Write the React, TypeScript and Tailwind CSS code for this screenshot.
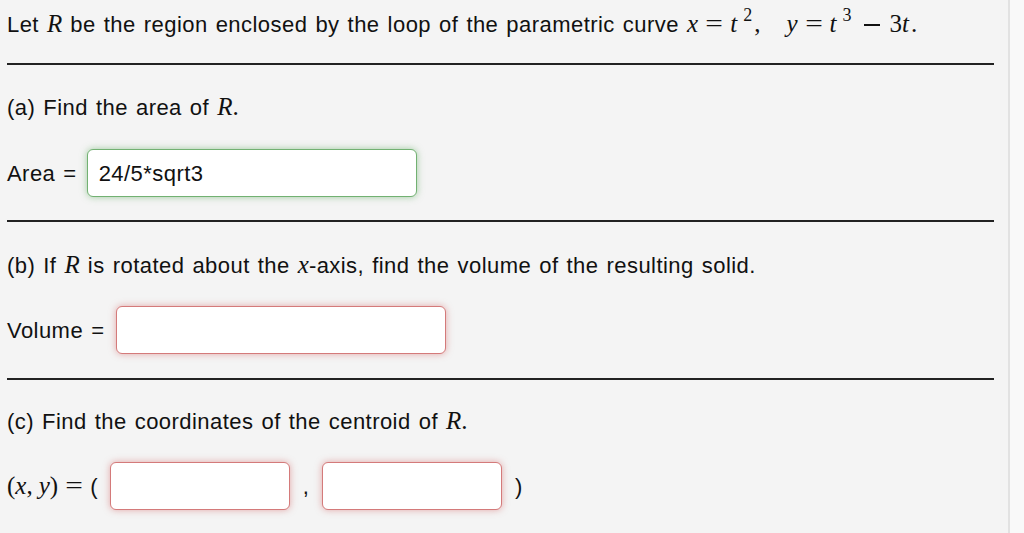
import React from "react";

const serif = { fontFamily: '"Liberation Serif", "DejaVu Serif", serif', letterSpacing: 0, wordSpacing: 0 };

const M = ({ children }: { children: React.ReactNode }) => (
  <span className="italic text-[25px] leading-none" style={serif}>
    {children}
  </span>
);
const N = ({ children, cls = "" }: { children: React.ReactNode; cls?: string }) => (
  <span className={`text-[25px] leading-none ${cls}`} style={serif}>
    {children}
  </span>
);
const Eq = () => <span className="inline-block mx-[9px] scale-x-125 text-[25px] leading-none" style={serif}>=</span>;
const Sup = ({ children }: { children: React.ReactNode }) => (
  <span className="text-[18px] ml-[6px] mr-[2px] relative top-[-11px] leading-none" style={serif}>
    {children}
  </span>
);

const Hr = () => <div className="h-[2px] bg-[#222] mr-[14px]" />;

const Input = ({ ok, w, value }: { ok?: boolean; w: string; value?: string }) => (
  <div
    className={`${w} h-[48px] shrink-0 bg-white rounded-[6px] border flex items-center px-[11px] text-[22px] ${
      ok
        ? "border-[#72b172] shadow-[0_0_7px_rgba(90,170,90,0.55)]"
        : "border-[#d47a7a] shadow-[0_0_7px_rgba(210,90,90,0.5)]"
    }`}
  >
    {value}
  </div>
);

export default function App() {
  return (
    <div
      className="w-[1024px] h-[533px] flex bg-[#f9f9f9] overflow-hidden text-[#111]"
      style={{ fontFamily: '"Liberation Sans", Arial, sans-serif', wordSpacing: "1.5px", letterSpacing: "0.45px" }}
    >
      <div className="w-[1010px] h-full bg-[#f4f4f4] border-r-2 border-[#e2e2e2] pl-[7px] flex flex-col">
        <div className="h-[48px] flex items-center text-[22px] whitespace-nowrap">
          <span>
            Let <M>R</M> be the region enclosed by the loop of the parametric curve <M>x</M>
            <Eq />
            <M>t</M>
            <Sup>2</Sup>
            <N>,</N>
            <span className="inline-block w-[26px]" />
            <M>y</M>
            <Eq />
            <M>t</M>
            <Sup>3</Sup>
            <span className="inline-block mx-[10px] w-[16px] h-[2px] bg-[#111] align-middle relative top-[-1px]" />
            <N>3</N>
            <M>t</M>
            <N cls="ml-[2px]">.</N>
          </span>
        </div>
        <div className="h-[15px]" />
        <Hr />
        <div className="h-[84px] flex items-center text-[22px]">
          <span>
            (a) Find the area of <M>R</M>
            <N>.</N>
          </span>
        </div>
        <div className="flex items-center gap-[10px] text-[22px]">
          <span>Area =</span>
          <Input ok w="w-[330px]" value="24/5*sqrt3" />
        </div>
        <div className="h-[23px]" />
        <Hr />
        <div className="h-[84px] pt-[2px] flex items-center text-[22px]">
          <span>
            (b) If <M>R</M> is rotated about the <M>x</M>-axis, find the volume of the resulting solid.
          </span>
        </div>
        <div className="flex items-center gap-[12px] text-[22px]">
          <span>Volume =</span>
          <Input w="w-[330px]" />
        </div>
        <div className="h-[24px]" />
        <Hr />
        <div className="h-[82px] flex items-center text-[22px]">
          <span>
            (c) Find the coordinates of the centroid of <M>R</M>
            <N>.</N>
          </span>
        </div>
        <div className="flex items-center text-[22px]">
          <span className="whitespace-nowrap">
            <N>(</N>
            <M>x</M>
            <N cls="mr-[6px]">,</N>
            <M>y</M>
            <N>)</N>
            <Eq />(
          </span>
          <span className="w-[12px] shrink-0" />
          <Input w="w-[180px]" />
          <span className="w-[32px] text-center">,</span>
          <Input w="w-[180px]" />
          <span className="ml-[13px]">)</span>
        </div>
      </div>
    </div>
  );
}
